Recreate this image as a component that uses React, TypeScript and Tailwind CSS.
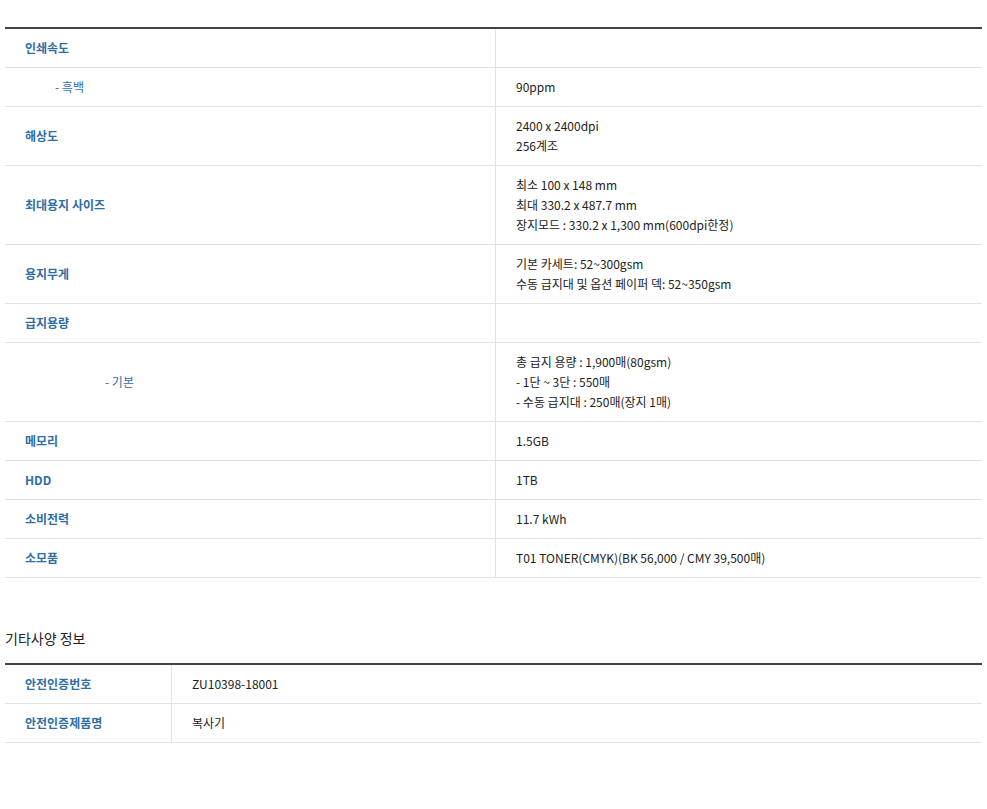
const rows: [string, string[], number?][] = [
  ["인쇄속도", []],
  ["- 흑백", ["90ppm"], 50],
  ["해상도", ["2400 x 2400dpi", "256계조"]],
  ["최대용지 사이즈", ["최소 100 x 148 mm", "최대 330.2 x 487.7 mm", "장지모드 : 330.2 x 1,300 mm(600dpi한정)"]],
  ["용지무게", ["기본 카세트: 52~300gsm", "수동 급지대 및 옵션 페이퍼 덱: 52~350gsm"]],
  ["급지용량", []],
  ["- 기본", ["총 급지 용량 : 1,900매(80gsm)", "- 1단 ~ 3단 : 550매", "- 수동 급지대 : 250매(장지 1매)"], 100],
  ["메모리", ["1.5GB"]],
  ["HDD", ["1TB"]],
  ["소비전력", ["11.7 kWh"]],
  ["소모품", ["T01 TONER(CMYK)(BK 56,000 / CMY 39,500매)"]],
];
const font = { fontFamily: '"Noto Sans CJK KR", "Liberation Sans", sans-serif' };
function Table({ data, lw }: { data: [string, string[], number?][]; lw: string }) {
  return (
    <div className="border-t-2 border-[#444]">
      {data.map(([l, v, ind], i) => (
        <div key={i} className="flex border-b border-[#e3e3e3] text-[12px] leading-[20px]">
          <div className={`${lw} shrink-0 border-r border-[#e3e3e3] py-[9px] flex items-center`} style={{ paddingLeft: ind ?? 20 }}>
            <span className={ind ? "text-[#2f6ea5]" : "text-[#2f6ea5] font-bold"}>{l}</span>
          </div>
          <div className="flex-1 py-[9px] pl-[20px] text-[#222] min-h-[38px]">
            {v.map((t, j) => <div key={j}>{t}</div>)}
            {v.length === 0 && <div>&nbsp;</div>}
          </div>
        </div>
      ))}
    </div>
  );
}
export default function App() {
  return (
    <div className="bg-white w-[987px] h-[809px] px-[5px] pt-[27px]" style={font}>
      <Table data={rows} lw="w-[491px]" />
      <div className="mt-[50px] text-[14px] text-[#222] leading-[20px]">기타사양 정보</div>
      <div className="mt-[15px]">
        <Table data={[["안전인증번호", ["ZU10398-18001"]], ["안전인증제품명", ["복사기"]]]} lw="w-[167px]" />
      </div>
    </div>
  );
}
